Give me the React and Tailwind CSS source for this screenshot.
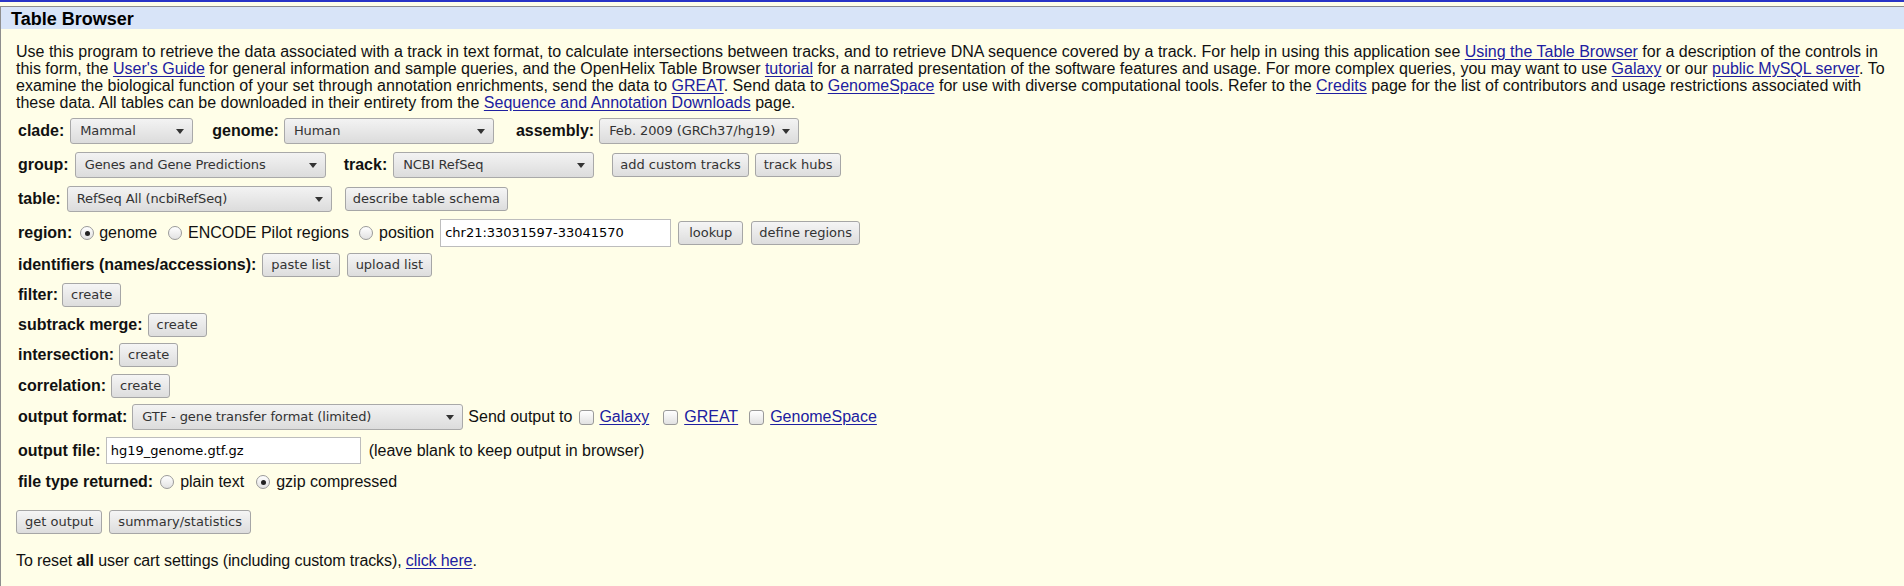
import React from 'react'

const ctl = "font-['DejaVu_Sans','Liberation_Sans',sans-serif] text-[13px]"

function Arrow() {
  return (
    <svg viewBox="0 0 8 5" className="w-[8px] h-[5px] shrink-0 ml-[6px]">
      <path d="M0 0h8L4 5z" fill="#333" />
    </svg>
  )
}

function Select({ className, children }) {
  return (
    <div
      className={`flex items-center justify-between h-[26px] rounded-[3px] border border-[#a9a9a9] bg-linear-to-b from-[#f3f3f3] to-[#dcdcdc] pl-[9px] pr-[8px] text-[#333] whitespace-nowrap ${ctl} ${className}`}
    >
      <span className="tracking-[-0.1px]">{children}</span>
      <Arrow />
    </div>
  )
}

function Button({ className = '', children }) {
  return (
    <div
      className={`inline-flex items-center h-[24px] rounded-[3px] border border-[#a6a6a6] bg-linear-to-b from-[#f5f5f5] to-[#dddddd] text-[#333] whitespace-nowrap ${ctl} ${className}`}
    >
      {children}
    </div>
  )
}

function Input({ className, value }) {
  return (
    <div
      className={`flex items-center border border-[#bdbdbd] bg-white px-[4px] text-black whitespace-nowrap ${ctl} ${className}`}
    >
      {value}
    </div>
  )
}

function Radio({ checked, className }) {
  return (
    <span
      className={`flex items-center justify-center w-[14px] h-[14px] rounded-full border border-[#9a9a9a] bg-linear-to-b from-white to-[#e2e2e2] shrink-0 ${className}`}
    >
      {checked && <span className="w-[5px] h-[5px] rounded-full bg-[#222]" />}
    </span>
  )
}

function Check({ className }) {
  return (
    <span
      className={`block w-[15px] h-[15px] rounded-[3px] border border-[#9a9a9a] bg-linear-to-b from-white to-[#e2e2e2] shrink-0 ${className}`}
    />
  )
}

function A({ children }) {
  return <a href="#" className="text-[#2020a0] underline underline-offset-[2px]">{children}</a>
}

export default function App() {
  return (
    <div className="min-h-[586px] bg-[#fffee8] font-['Liberation_Sans',Arial,sans-serif] text-[16px] text-[#111]">
      <div className="h-[2px] bg-[#2a35c6]" />
      <div className="h-[4px]" />
      <div className="border-t border-l border-[#8e8e8e] min-h-[580px]">
        {/* title bar */}
        <div className="h-[22px] bg-[#d8e4f8] pl-[10px] text-[18px] font-bold leading-[24px] text-black">
          Table Browser
        </div>

        <div className="pl-[15px] pr-[14px] pt-[14px]">
          <p className="leading-[17px]">
            Use this program to retrieve the data associated with a track in text format, to calculate intersections
            between tracks, and to retrieve DNA sequence covered by a track. For help in using this application see{' '}
            <A>Using the Table Browser</A> for a description of the controls in this form, the <A>User's Guide</A> for
            general information and sample queries, and the OpenHelix Table Browser <A>tutorial</A> for a narrated
            presentation of the software features and usage. For more complex queries, you may want to use{' '}
            <A>Galaxy</A> or our <A>public MySQL server</A>. To examine the biological function of your set through
            annotation enrichments, send the data to <A>GREAT</A>. Send data to <A>GenomeSpace</A> for use with diverse
            computational tools. Refer to the <A>Credits</A> page for the list of contributors and usage restrictions
            associated with these data. All tables can be downloaded in their entirety from the{' '}
            <A>Sequence and Annotation Downloads</A> page.
          </p>

          <div className="mt-[3px] whitespace-nowrap">
            {/* clade / genome / assembly */}
            <div className="flex items-center h-[34px] pl-[2px]">
              <b>clade:</b>
              <Select className="ml-[6px] w-[123px]">Mammal</Select>
              <b className="ml-[19px]">genome:</b>
              <Select className="ml-[5px] w-[210px]">Human</Select>
              <b className="ml-[22px]">assembly:</b>
              <Select className="ml-[5px] w-[200px]">Feb. 2009 (GRCh37/hg19)</Select>
            </div>

            {/* group / track */}
            <div className="flex items-center h-[34px] pl-[2px]">
              <b>group:</b>
              <Select className="ml-[6px] w-[251px]">Genes and Gene Predictions</Select>
              <b className="ml-[18px]">track:</b>
              <Select className="ml-[6px] w-[201px]">NCBI RefSeq</Select>
              <Button className="ml-[18px] px-[7px]">add custom tracks</Button>
              <Button className="ml-[6px] px-[8px]">track hubs</Button>
            </div>

            {/* table */}
            <div className="flex items-center h-[34px] pl-[2px]">
              <b>table:</b>
              <Select className="ml-[6px] w-[265px]">RefSeq All (ncbiRefSeq)</Select>
              <Button className="ml-[13px] px-[7px]">describe table schema</Button>
            </div>

            {/* region */}
            <div className="flex items-center h-[34px] pl-[2px]">
              <b>region:</b>
              <Radio checked className="ml-[8px]" />
              <span className="ml-[5px]">genome</span>
              <Radio className="ml-[11px]" />
              <span className="ml-[6px]">ENCODE Pilot regions</span>
              <Radio className="ml-[10px]" />
              <span className="ml-[6px]">position</span>
              <Input className="ml-[6px] w-[231px] h-[28px]" value="chr21:33031597-33041570" />
              <Button className="ml-[7px] px-[10px]">lookup</Button>
              <Button className="ml-[8px] px-[7px]">define regions</Button>
            </div>

            {/* identifiers */}
            <div className="flex items-center h-[30px] pl-[2px]">
              <b>identifiers (names/accessions):</b>
              <Button className="ml-[6px] px-[8px]">paste list</Button>
              <Button className="ml-[7px] px-[8px]">upload list</Button>
            </div>

            <div className="flex items-center h-[30px] pl-[2px]">
              <b>filter:</b>
              <Button className="ml-[4px] px-[8px]">create</Button>
            </div>

            <div className="flex items-center h-[30px] pl-[2px]">
              <b>subtrack merge:</b>
              <Button className="ml-[5px] px-[8px]">create</Button>
            </div>

            <div className="flex items-center h-[30px] pl-[2px]">
              <b>intersection:</b>
              <Button className="ml-[5px] px-[8px]">create</Button>
            </div>

            <div className="flex items-center h-[31px] pl-[2px]">
              <b>correlation:</b>
              <Button className="ml-[5px] px-[8px]">create</Button>
            </div>

            {/* output format */}
            <div className="flex items-center h-[32px] pl-[2px]">
              <b>output format:</b>
              <Select className="ml-[5px] w-[331px]">GTF - gene transfer format (limited)</Select>
              <span className="ml-[5px]">Send output to</span>
              <Check className="ml-[7px]" />
              <span className="ml-[5px]"><A>Galaxy</A></span>
              <Check className="ml-[14px]" />
              <span className="ml-[6px]"><A>GREAT</A></span>
              <Check className="ml-[11px]" />
              <span className="ml-[6px]"><A>GenomeSpace</A></span>
            </div>

            {/* output file */}
            <div className="flex items-center h-[35px] pl-[2px]">
              <b>output file:</b>
              <Input className="ml-[5px] w-[255px] h-[27px]" value="hg19_genome.gtf.gz" />
              <span className="ml-[8px]">(leave blank to keep output in browser)</span>
            </div>

            {/* file type */}
            <div className="flex items-center h-[28px] pl-[2px]">
              <b>file type returned:</b>
              <Radio className="ml-[7px]" />
              <span className="ml-[6px]">plain text</span>
              <Radio checked className="ml-[12px]" />
              <span className="ml-[6px]">gzip compressed</span>
            </div>

            <div className="flex items-center mt-[14px] h-[24px]">
              <Button className="px-[8px]">get output</Button>
              <Button className="ml-[7px] px-[8px]">summary/statistics</Button>
            </div>

            <p className="mt-[18px] leading-[17px] tracking-[-0.1px]">
              To reset <b>all</b> user cart settings (including custom tracks), <A>click here</A>.
            </p>
          </div>
        </div>
      </div>
    </div>
  )
}
